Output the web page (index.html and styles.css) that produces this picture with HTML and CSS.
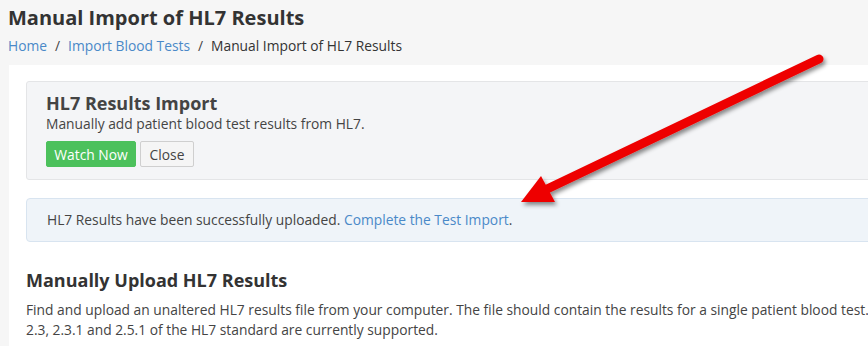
FILE: index.html
```html
<!DOCTYPE html>
<html>
<head>
<meta charset="utf-8">
<title>Manual Import of HL7 Results</title>
<link rel="stylesheet" href="styles.css">
</head>
<body>
<div class="page">
  <h1 class="title">Manual Import of HL7 Results</h1>
  <nav class="crumbs">
    <a href="#">Home</a><span class="sep">/</span><a href="#">Import Blood Tests</a><span class="sep">/</span><span>Manual Import of HL7 Results</span>
  </nav>
  <div class="card">
    <div class="promo">
      <h2 class="promo-title">HL7 Results Import</h2>
      <p class="promo-text">Manually add patient blood test results from HL7.</p>
      <div class="actions">
        <button class="btn btn-green">Watch Now</button>
        <button class="btn btn-plain">Close</button>
      </div>
    </div>
    <div class="alert">HL7 Results have been successfully uploaded. <a href="#">Complete the Test Import</a>.</div>
    <h3 class="section-title">Manually Upload HL7 Results</h3>
    <p class="section-text">Find and upload an unaltered HL7 results file from your computer. The file should contain the results for a single patient blood test.<br>2.3, 2.3.1 and 2.5.1 of the HL7 standard are currently supported.</p>
  </div>
  <svg class="arrow" width="868" height="346" viewBox="0 0 868 346">
    <defs>
      <filter id="sh" x="-10%" y="-10%" width="130%" height="130%">
        <feDropShadow dx="2" dy="3" stdDeviation="2" flood-color="#000" flood-opacity="0.45"/>
      </filter>
    </defs>
    <g filter="url(#sh)">
      <line x1="819" y1="59" x2="545" y2="190" stroke="#ee0000" stroke-width="9" stroke-linecap="round"/>
      <polygon points="541,176 521,202 555,202" fill="#ee0000"/>
    </g>
  </svg>
</div>
</body>
</html>
```
FILE: styles.css
```css
html, body {
  margin: 0;
  padding: 0;
  background: #f6f6f6;
  overflow: hidden;
}
body {
  font-family: "Open Sans", "Liberation Sans", sans-serif;
  color: #444;
  width: 868px;
  height: 346px;
}
.page {
  position: relative;
  padding: 0 0 0 8px;
  height: 346px;
  overflow: hidden;
}
.title {
  margin: 0;
  padding-top: 5px;
  font-size: 20px;
  line-height: 26px;
  font-weight: 700;
  color: #333;
}
.crumbs {
  margin-top: 6px;
  font-size: 13.8px;
  line-height: 18px;
  color: #333;
}
.crumbs a {
  color: #4a89c8;
  text-decoration: none;
}
.crumbs .sep {
  margin: 0 8px;
  color: #444;
}
.card {
  margin-top: 10px;
  margin-left: 1px;
  width: 900px;
  background: #fff;
  padding: 16px 0 0 17px;
  height: 300px;
  box-sizing: border-box;
}
.promo {
  background: #f4f5f7;
  border: 1px solid #e4e5e7;
  border-radius: 3px;
  padding: 10px 19px 11px;
  height: 99px;
  box-sizing: border-box;
}
.promo-title {
  margin: 0;
  font-size: 18px;
  line-height: 22px;
  font-weight: 700;
  color: #444;
}
.promo-text {
  margin: 0;
  font-size: 13.8px;
  line-height: 20px;
  color: #444;
}
.actions {
  display: flex;
  gap: 4px;
  margin-top: 7px;
}
.btn {
  font-family: inherit;
  font-size: 13.8px;
  height: 26px;
  border-radius: 2px;
  padding: 0;
  white-space: nowrap;
  cursor: pointer;
}
.btn-green {
  background: #4cc15c;
  border: 1px solid #4cc15c;
  color: #fff;
  width: 90px;
}
.btn-plain {
  background: #f5f5f5;
  border: 1px solid #cfcfcf;
  color: #444;
  width: 54px;
}
.alert {
  margin-top: 18px;
  background: #eff4f9;
  border: 1px solid #d8e4f0;
  border-radius: 4px;
  padding: 12px 20px;
  font-size: 13.8px;
  line-height: 18px;
  color: #444;
}
.alert a {
  color: #4a89c8;
  text-decoration: none;
}
.section-title {
  margin: 27px 0 0;
  font-size: 18px;
  line-height: 22px;
  font-weight: 700;
  color: #333;
}
.section-text {
  margin: 9px 0 0;
  font-size: 13.8px;
  line-height: 20px;
  color: #444;
  white-space: nowrap;
}
.arrow {
  position: absolute;
  left: 0;
  top: 0;
  pointer-events: none;
}
```
